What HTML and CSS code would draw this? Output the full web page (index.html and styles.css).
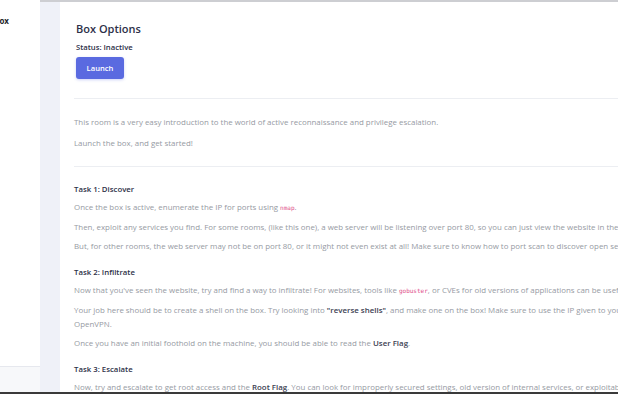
FILE: index.html
```html
<!DOCTYPE html>
<html lang="en">
  <head>
    <meta charset="UTF-8" />
    <meta name="viewport" content="width=device-width, initial-scale=1.0" />
    <title>Box Options</title>
    <link rel="stylesheet" href="styles.css">
  </head>
  <body>
    <div class="app">
      <aside class="sidebar">
        <div class="side-title">Box</div>
        <div class="side-foot"></div>
      </aside>
      <main class="main">
        <div class="card">
          <section class="box-options">
            <h2>Box Options</h2>
            <div class="status">Status: Inactive</div>
            <button class="launch">Launch</button>
          </section>
          <section class="intro">
            <p>This room is a very easy introduction to the world of active reconnaissance and privilege escalation.</p>
            <p>Launch the box, and get started!</p>
          </section>
          <section class="tasks">
            <h3>Task 1: Discover</h3>
            <p>Once the box is active, enumerate the IP for ports using <code>nmap</code>.</p>
            <p>Then, exploit any services you find. For some rooms, (like this one), a web server will be listening over port 80, so you can just view the website in the browser.</p>
            <p>But, for other rooms, the web server may not be on port 80, or it might not even exist at all! Make sure to know how to port scan to discover open services.</p>
            <h3>Task 2: Infiltrate</h3>
            <p>Now that you've seen the website, try and find a way to infiltrate! For websites, tools like <code>gobuster</code>, or CVEs for old versions of applications can be useful.</p>
            <p>Your job here should be to create a shell on the box. Try looking into <b>"reverse shells"</b>, and make one on the box! Make sure to use the IP given to you by OpenVPN.</p>
            <p>Once you have an initial foothold on the machine, you should be able to read the <b>User Flag</b>.</p>
            <h3>Task 3: Escalate</h3>
            <p>Now, try and escalate to get root access and the <b>Root Flag</b>. You can look for improperly secured settings, old version of internal services, or exploitable binaries.</p>
          </section>
        </div>
      </main>
    </div>
  </body>
</html>
```

FILE: styles.css
```css
* {
  margin: 0;
  padding: 0;
  box-sizing: border-box;
}
body {
  font-family: 'Open Sans', sans-serif;
  background: #fff;
  overflow: hidden;
  height: 394px;
}
.app {
  display: flex;
  height: 394px;
  border-bottom: 2px solid #3a3a3a;
}
.sidebar {
  width: 40px;
  flex-shrink: 0;
  display: flex;
  flex-direction: column;
  justify-content: space-between;
  overflow: hidden;
  background: #fff;
}
.side-title {
  margin: 15px 0 0 -6px;
  font-size: 8px;
  font-weight: 700;
  line-height: 12px;
  color: #1d1f2b;
}
.side-foot {
  height: 26px;
  border-top: 1px solid #e6e8ee;
  background: #f7f8fa;
}
.main {
  flex: 1;
  display: flex;
  background: #eff1f8;
  border-top: 2px solid #cdced2;
  padding-left: 20px;
  overflow: hidden;
}
.card {
  width: 616px;
  flex-shrink: 0;
  background: #fff;
  padding: 0 14px;
}
.box-options {
  padding: 19px 2px 19px;
  border-bottom: 1px solid #eceef2;
}
.box-options h2 {
  font-size: 11px;
  font-weight: 600;
  line-height: 16px;
  color: #2d3048;
}
.status {
  margin-top: 4px;
  font-size: 7.7px;
  font-weight: 600;
  line-height: 12px;
  color: #2d3048;
}
.launch {
  margin-top: 4px;
  width: 48px;
  height: 22px;
  border: none;
  border-radius: 3px;
  background: #5a6ae0;
  color: #fff;
  font-family: inherit;
  font-size: 7.6px;
  font-weight: 600;
  box-shadow: 0 1px 3px rgba(90, 106, 224, 0.3);
}
p {
  font-size: 7.9px;
  line-height: 14px;
  color: #969aa3;
}
.intro {
  padding: 16px 0 16px;
  border-bottom: 1px solid #eceef2;
}
.intro p + p {
  margin-top: 7px;
}
.tasks {
  padding-top: 15px;
}
.tasks h3 {
  font-size: 7.8px;
  font-weight: 600;
  line-height: 14px;
  color: #2d3048;
  margin: 12px 0 4px;
}
.tasks h3:first-child {
  margin-top: 0;
}
.tasks p {
  margin-bottom: 5px;
}
.tasks b {
  font-weight: 600;
  color: #3b3e52;
}
code {
  font-family: 'DejaVu Sans Mono', monospace;
  font-size: 6px;
  color: #e0508a;
}
```
